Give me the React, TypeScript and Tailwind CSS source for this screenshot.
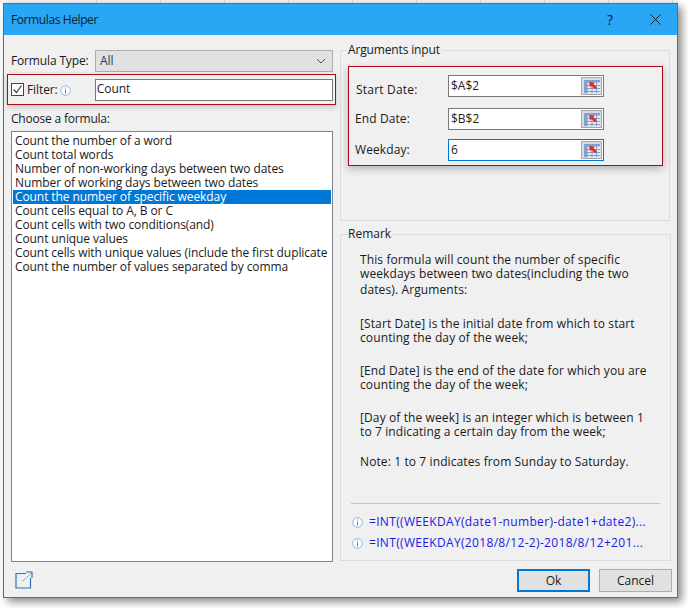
import React from "react";

const font = { fontFamily: '"Open Sans", "Noto Sans", sans-serif' };

function Info({ className = "" }: { className?: string }) {
  return (
    <svg width="11" height="11" viewBox="0 0 11 11" className={className}>
      <circle cx="5.5" cy="5.5" r="4.8" fill="#fff" stroke="#8db4e0" strokeWidth="1" />
      <rect x="5" y="2.5" width="1" height="1" fill="#4f87c6" />
      <rect x="5" y="4.5" width="1" height="4" fill="#4f87c6" />
    </svg>
  );
}

function RefIcon() {
  return (
    <svg width="16" height="13" viewBox="0 0 16 13">
      <rect x="0" y="0" width="16" height="13" fill="#e8eef7" />
      <rect x="0" y="0" width="16" height="2.5" fill="#7fa3d3" />
      <rect x="0" y="0" width="3" height="13" fill="#7fa3d3" />
      <path d="M0 5.5h16M0 8.5h16M0 11.5h16M3 0v13M8 0v13M12.5 0v13" stroke="#7d9cc8" strokeWidth="1" />
      <path d="M5 2l6 .5-1.6 1.6 3.6 3.4-2 2-3.5-3.5L6 7.6z" fill="#d8322a" />
    </svg>
  );
}

function RefInput({ value, focus = false }: { value: string; focus?: boolean }) {
  return (
    <div
      className={
        focus
          ? "w-[156px] h-[22px] border border-[#0078d7] bg-white flex items-center justify-between pl-[2px] pr-[1px]"
          : "w-[156px] h-[22px] border border-[#7a7a7a] bg-white flex items-center justify-between pl-[2px] pr-[1px]"
      }
    >
      <span className="text-[#222]">{value}</span>
      <span className="w-[21px] h-[18px] bg-[#dcdcdc] border border-[#a8a8a8] flex items-center justify-center">
        <RefIcon />
      </span>
    </div>
  );
}

const formulas = [
  "Count the number of a word",
  "Count total words",
  "Number of non-working days between two dates",
  "Number of working days between two dates",
  "Count the number of specific weekday",
  "Count cells equal to A, B or C",
  "Count cells with two conditions(and)",
  "Count unique values",
  "Count cells with unique values (include the first duplicate",
  "Count the number of values separated by comma",
];

export default function App() {
  return (
    <div className="w-[688px] h-[608px] bg-white overflow-hidden text-[12px] leading-[14px] text-[#1a1a1a]" style={font}>
      <div className="h-[3px] bg-[#f1f1f1] bg-[repeating-linear-gradient(90deg,#f1f1f1_0px,#f1f1f1_63px,#d8d8d8_63px,#d8d8d8_64px)] bg-[position:30px_0] ml-[3px] w-[675px]" />
      <div className="ml-[3px] w-[675px] h-[595px] border border-[#6a6a6a] bg-[#f0f0f0] flex flex-col shadow-[4px_4px_8px_rgba(0,0,0,0.45)]">
        <div className="h-[31px] bg-[#29a6f4] flex items-center pl-[7px] shrink-0">
          <span className="text-[12px] tracking-[-0.4px] text-[#10202c]">Formulas Helper</span>
          <span className="ml-auto mr-[37px] text-[14px] text-[#10202c]">?</span>
          <svg width="11" height="11" viewBox="0 0 11 11" className="mr-[16px]">
            <path d="M0.5 0.5l10 10M10.5 0.5l-10 10" stroke="#10202c" strokeWidth="1" fill="none" />
          </svg>
        </div>

        <div className="flex flex-1 min-h-0">
          <div className="w-[336px] shrink-0 pl-[3px] flex flex-col">
            <div className="flex items-center h-[23px] mt-[14px] pl-[4px]">
              <span className="w-[84px] tracking-[-0.15px]">Formula Type:</span>
              <div className="w-[238px] h-[22px] bg-[#e1e1e1] border border-[#adadad] flex items-center justify-between pl-[4px] pr-[6px]">
                <span className="text-[#1f3a5f]">All</span>
                <svg width="10" height="6" viewBox="0 0 10 6">
                  <path d="M1 1l4 4 4-4" stroke="#555" strokeWidth="1" fill="none" />
                </svg>
              </div>
            </div>
            <div className="w-[329px] h-[31px] mt-[2px] border border-[#a80c14] flex items-center pl-[3px] shadow-[0_2px_6px_rgba(0,0,0,0.2)]">
              <span className="w-[13px] h-[13px] border border-[#444] bg-white flex items-center justify-center">
                <svg width="11" height="11" viewBox="0 0 11 11">
                  <path d="M1.5 5.5l3 3 5-7" stroke="#444" strokeWidth="1.2" fill="none" />
                </svg>
              </span>
              <span className="ml-[3px] tracking-[-0.1px]">Filter:</span>
              <Info className="ml-[2px] mt-[2px]" />
              <div className="ml-[24px] w-[238px] h-[22px] border border-[#7a7a7a] bg-white flex items-center pl-[1px] pb-[1px] text-[#222]">Count</div>
            </div>
            <div className="pl-[4px] h-[26px] pb-[1px] pt-[2px] flex items-center tracking-[-0.2px]">Choose a formula:</div>
            <div className="ml-[4px] w-[322px] h-[431px] border border-[#82828c] bg-white pt-[2px] tracking-[-0.09px]">
              {formulas.map((f, i) => (
                <div key={f} className={i === 4 ? "h-[14px] ml-[1px] mr-[1px] pl-[2px] bg-[#0078d7] text-white whitespace-nowrap" : "h-[14px] ml-[1px] mr-[1px] pl-[2px] whitespace-nowrap"}>
                  {f}
                </div>
              ))}
            </div>
            <div className="pl-[8px] pt-[9px]">
              <svg width="18" height="18" viewBox="0 0 18 18">
                <path d="M11 2.5H1V17h14.5V7" stroke="#2f74bb" strokeWidth="1.2" fill="none" />
                <path d="M11 1h6v6" stroke="#2f74bb" strokeWidth="1.2" fill="none" />
                <path d="M8 10l8.5-8.5" stroke="#6a9fd6" strokeWidth="1.2" strokeDasharray="1 1" fill="none" />
              </svg>
            </div>
          </div>

          <div className="flex-1 flex flex-col">
            <div className="w-[330px] h-[171px] mt-[15px] border border-[#dcdcdc] relative px-[7px] pt-[15px]">
              <span className="absolute -top-[8px] left-[7px] bg-[#f0f0f0] pr-[2px] tracking-[-0.15px]">Arguments input</span>
              <div className="w-[315px] h-[100px] border border-[#a80c14] shadow-[0_3px_8px_rgba(0,0,0,0.25)] pt-[8px] pl-[6px] flex flex-col">
                <div className="flex items-center">
                  <span className="w-[93px] pl-[1px] pt-[8px] tracking-[0.2px]">Start Date:</span>
                  <RefInput value="$A$2" />
                </div>
                <div className="flex items-center mt-[11px]">
                  <span className="w-[93px] tracking-[0.1px]">End Date:</span>
                  <RefInput value="$B$2" />
                </div>
                <div className="flex items-center mt-[9px]">
                  <span className="w-[93px] tracking-[0.1px]">Weekday:</span>
                  <RefInput value="6" focus />
                </div>
              </div>
            </div>
            <div className="w-[331px] h-[327px] mt-[13px] border border-[#dcdcdc] relative flex flex-col">
              <span className="absolute -top-[8px] left-[7px] bg-[#f0f0f0] pr-[2px]">Remark</span>
              <div className="pl-[19px] pt-[18px] pr-[6px] flex-1 tracking-[0.11px] whitespace-nowrap">
                <p>This formula will count the number of specific</p>
                <p>weekdays between two dates(including the two</p>
                <p className="mt-[2px]">dates). Arguments:</p>
                <p className="mt-[20px]">[Start Date] is the initial date from which to start</p>
                <p>counting the day of the week;</p>
                <p className="mt-[19px]">[End Date] is the end of the date for which you are</p>
                <p>counting the day of the week;</p>
                <p className="mt-[19px]">[Day of the week] is an integer which is between 1</p>
                <p>to 7 indicating a certain day from the week;</p>
                <p className="mt-[16px]">Note: 1 to 7 indicates from Sunday to Saturday.</p>
              </div>
              <div className="mx-[10px] border-t border-[#c4c4c4] h-[52px] pt-[11px] pb-[5px] flex flex-col justify-between text-[#1a1ae6] mb-[5px] tracking-[0.33px]">
                <div className="flex items-center pl-[1px]">
                  <Info />
                  <span className="ml-[6px] whitespace-nowrap">=INT((WEEKDAY(date1-number)-date1+date2)...</span>
                </div>
                <div className="flex items-center pl-[1px]">
                  <Info />
                  <span className="ml-[6px] whitespace-nowrap">=INT((WEEKDAY(2018/8/12-2)-2018/8/12+201...</span>
                </div>
              </div>
            </div>
            <div className="flex justify-end gap-[9px] pr-[5px] mt-[8px]">
              <div className="w-[73px] h-[23px] bg-[#e1e1e1] border-2 border-[#0078d7] flex items-center justify-center">Ok</div>
              <div className="w-[73px] h-[23px] bg-[#e1e1e1] border border-[#adadad] flex items-center justify-center">Cancel</div>
            </div>
          </div>
        </div>
      </div>
    </div>
  );
}
